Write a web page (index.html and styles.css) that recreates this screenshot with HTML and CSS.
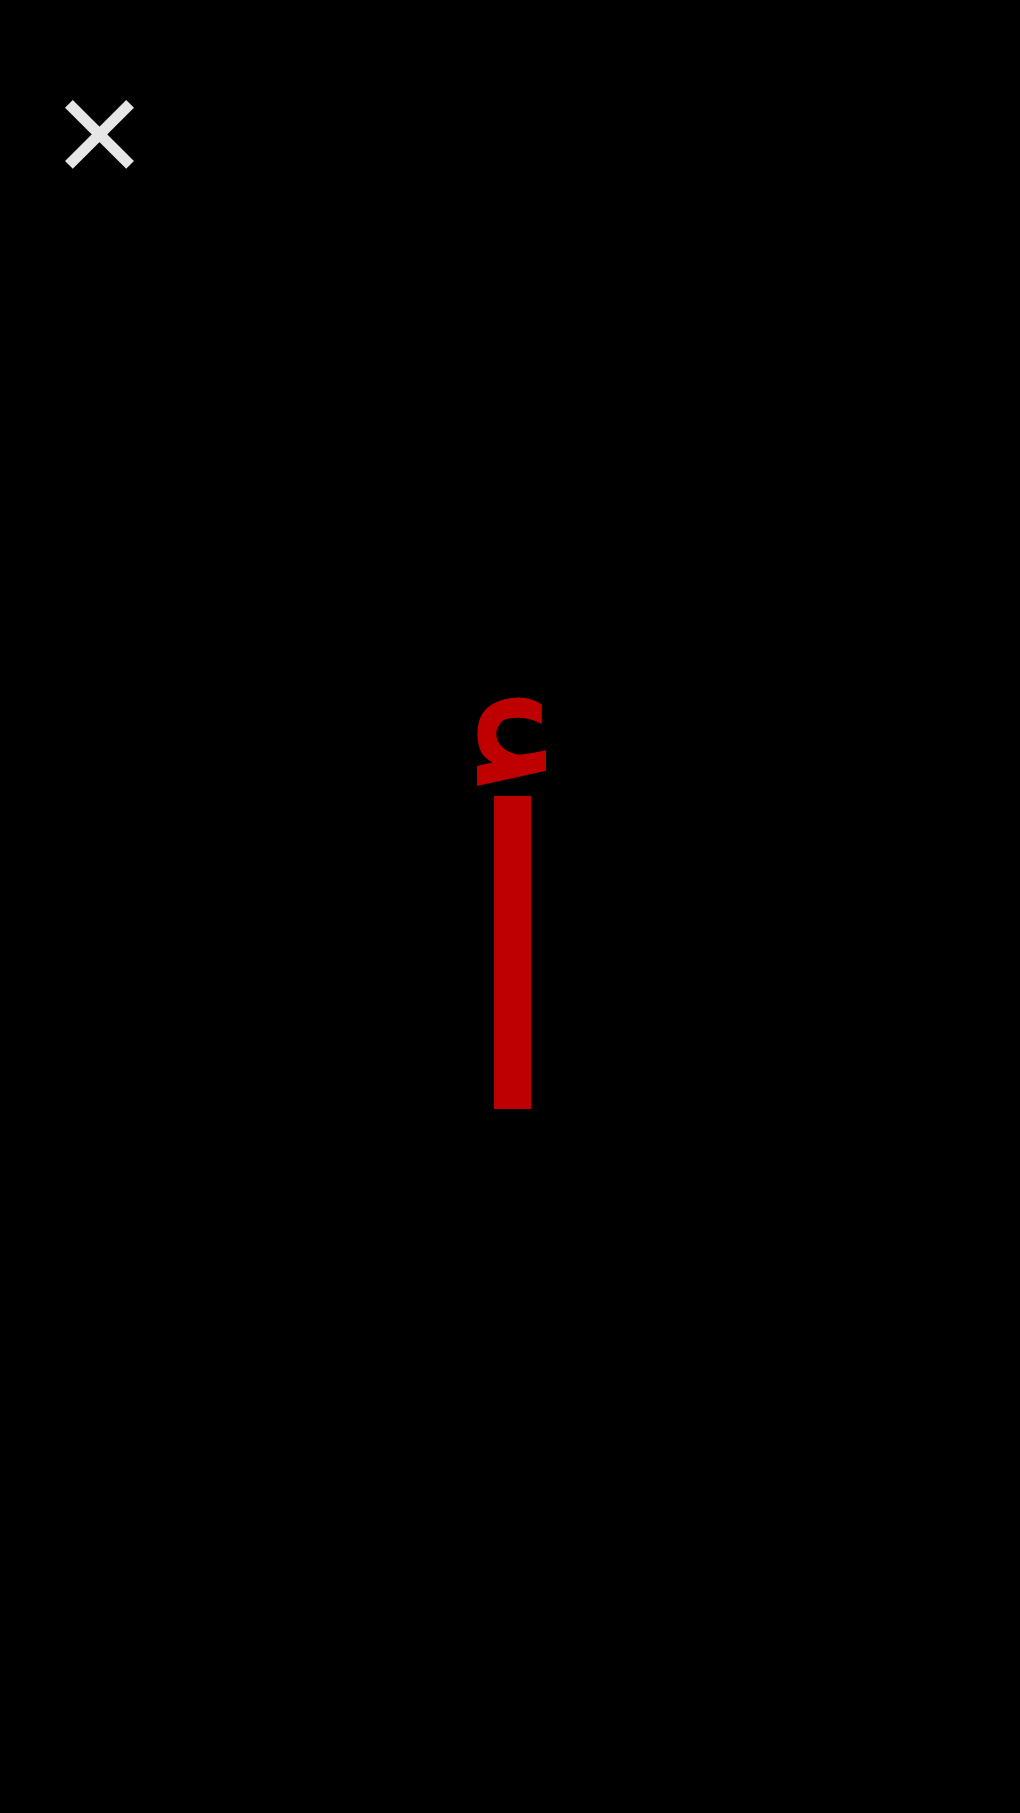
FILE: index.html
```html
<!DOCTYPE html>
<html lang="ar">
<head>
<meta charset="utf-8">
<title>أ</title>
<link rel="stylesheet" href="styles.css">
</head>
<body>
<main class="lightbox">
  <button class="close" type="button" aria-label="إغلاق">
    <svg class="close-icon" viewBox="0 0 80 80" aria-hidden="true">
      <path d="M9.9 9.9 71.1 70.9 M71.1 9.9 9.9 70.9"/>
    </svg>
  </button>
  <div class="mark" dir="rtl">أ</div>
</main>
</body>
</html>
```
FILE: styles.css
```css
html, body {
  margin: 0;
  height: 100%;
  background: #000;
}

.lightbox {
  position: relative;
  height: 100vh;
  display: flex;
  align-items: center;
  justify-content: center;
  overflow: hidden;
}

.close {
  position: absolute;
  top: 94px;
  left: 59px;
  width: 80px;
  height: 80px;
  padding: 0;
  border: 0;
  background: none;
}

.close-icon {
  display: block;
  width: 80px;
  height: 80px;
  fill: none;
  stroke: #e6e6e6;
  stroke-width: 11;
}

.mark {
  margin-top: 120px;
  margin-left: 5px;
  font-family: "DejaVu Sans", sans-serif;
  font-weight: 400;
  font-size: 412px;
  line-height: 1;
  color: #bf0000;
}
```
